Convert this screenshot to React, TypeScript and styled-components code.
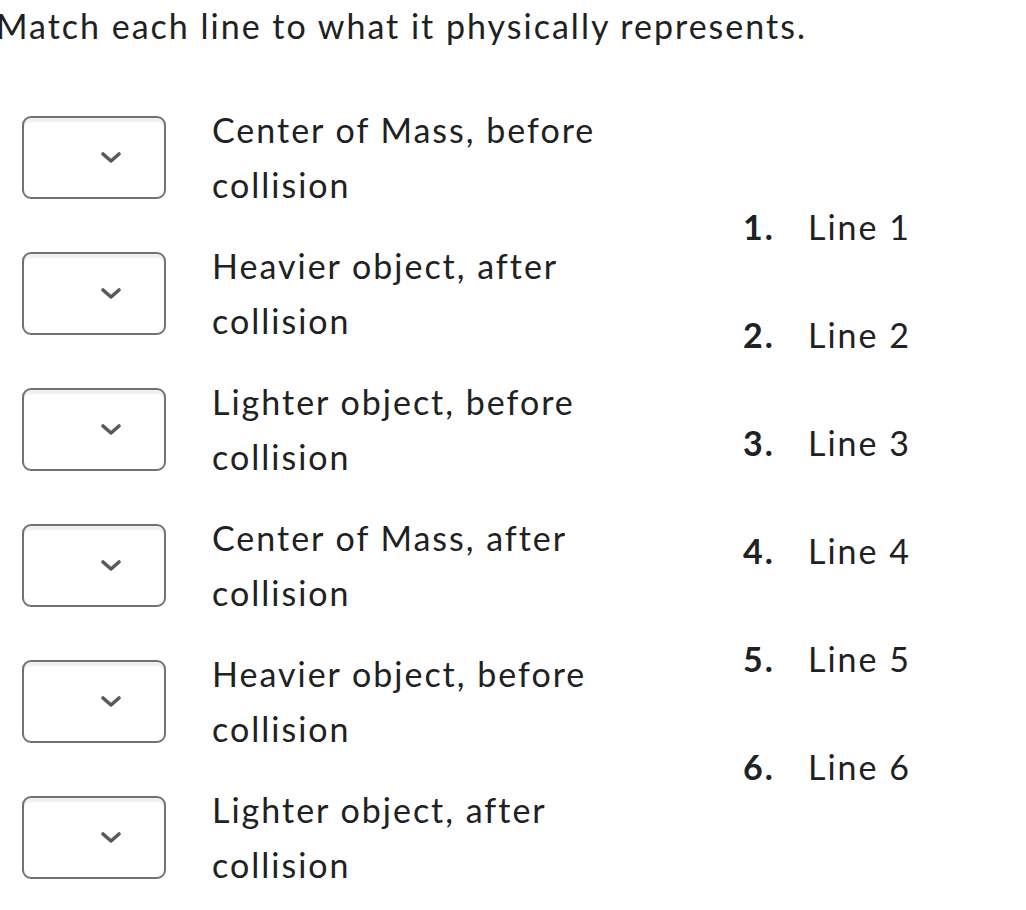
import React from "react";
import styled, { createGlobalStyle } from "styled-components";

const Global = createGlobalStyle`
  html, body { margin: 0; padding: 0; background: #ffffff; }
  body { font-family: Lato, "Noto Sans", sans-serif; color: #202122; }
`;

const Page = styled.div`
  width: 1026px;
  height: 910px;
  overflow: hidden;
  box-sizing: border-box;
  padding-top: 3px;
  letter-spacing: 2px;
`;

const Title = styled.h1`
  margin: 0 0 0 -4px;
  font-size: 34px;
  line-height: 46px;
  font-weight: 400;
  white-space: nowrap;
`;

const Body = styled.div`
  display: grid;
  grid-template-columns: 720px auto;
  align-items: center;
  margin-top: 53px;
`;

const Choices = styled.div`
  display: flex;
  flex-direction: column;
  gap: 26px;
  padding-left: 22px;
`;

const Row = styled.div`
  display: flex;
  align-items: center;
  gap: 46px;
`;

const SelectBox = styled.div`
  flex: none;
  width: 144px;
  height: 83px;
  box-sizing: border-box;
  border: 2px solid #6e7376;
  border-radius: 9px;
  background: #ffffff;
  box-shadow: inset 0 4px 0 #eff1f3;
  display: flex;
  align-items: center;
  justify-content: flex-end;
  padding-right: 42px;
  padding-top: 2px;
`;

const Label = styled.div`
  width: 420px;
  font-size: 34px;
  line-height: 55px;
`;

const List = styled.ol`
  list-style: none;
  margin: 0;
  padding: 0 0 0 23px;
  display: flex;
  flex-direction: column;
  gap: 54px;
`;

const Item = styled.li`
  display: flex;
  font-size: 34px;
  line-height: 54px;
`;

const Num = styled.span`
  width: 65px;
  font-weight: 700;
`;

const Chevron = () => (
  <svg width="22" height="14" viewBox="0 0 22 14">
    <path
      d="M3 3 L11 10 L19 3"
      fill="none"
      stroke="#565a5c"
      strokeWidth="3.6"
      strokeLinecap="round"
      strokeLinejoin="round"
    />
  </svg>
);

const labels = [
  "Center of Mass, before collision",
  "Heavier object, after collision",
  "Lighter object, before collision",
  "Center of Mass, after collision",
  "Heavier object, before collision",
  "Lighter object, after collision",
];

export default function App() {
  return (
    <Page>
      <Global />
      <Title>Match each line to what it physically represents.</Title>
      <Body>
        <Choices>
          {labels.map((l) => (
            <Row key={l}>
              <SelectBox>
                <Chevron />
              </SelectBox>
              <Label>{l}</Label>
            </Row>
          ))}
        </Choices>
        <List>
          {[1, 2, 3, 4, 5, 6].map((n) => (
            <Item key={n}>
              <Num>{n}.</Num>
              <span>Line {n}</span>
            </Item>
          ))}
        </List>
      </Body>
    </Page>
  );
}
